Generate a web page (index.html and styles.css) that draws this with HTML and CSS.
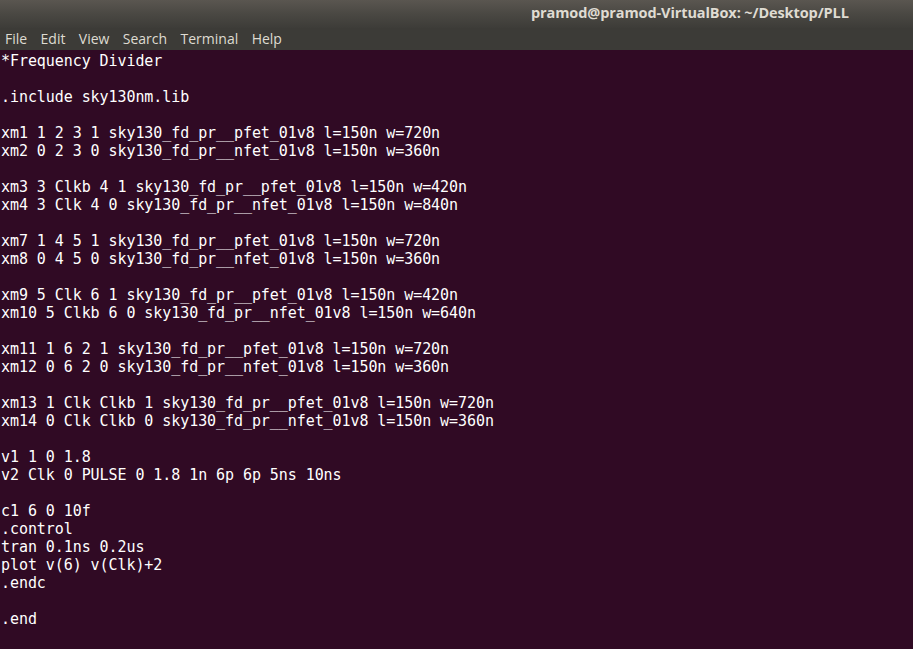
FILE: index.html
```html
<!DOCTYPE html>
<html>
<head>
<meta charset="utf-8">
<link rel="stylesheet" href="styles.css">
</head>
<body>
<div class="window">
  <div class="titlebar"><span class="title">pramod@pramod-VirtualBox: ~/Desktop/PLL</span></div>
  <div class="menubar">
    <span class="menu">File</span>
    <span class="menu">Edit</span>
    <span class="menu">View</span>
    <span class="menu">Search</span>
    <span class="menu">Terminal</span>
    <span class="menu">Help</span>
  </div>
  <pre class="term">*Frequency Divider

.include sky130nm.lib

xm1 1 2 3 1 sky130_fd_pr__pfet_01v8 l=150n w=720n
xm2 0 2 3 0 sky130_fd_pr__nfet_01v8 l=150n w=360n

xm3 3 Clkb 4 1 sky130_fd_pr__pfet_01v8 l=150n w=420n
xm4 3 Clk 4 0 sky130_fd_pr__nfet_01v8 l=150n w=840n

xm7 1 4 5 1 sky130_fd_pr__pfet_01v8 l=150n w=720n
xm8 0 4 5 0 sky130_fd_pr__nfet_01v8 l=150n w=360n

xm9 5 Clk 6 1 sky130_fd_pr__pfet_01v8 l=150n w=420n
xm10 5 Clkb 6 0 sky130_fd_pr__nfet_01v8 l=150n w=640n

xm11 1 6 2 1 sky130_fd_pr__pfet_01v8 l=150n w=720n
xm12 0 6 2 0 sky130_fd_pr__nfet_01v8 l=150n w=360n

xm13 1 Clk Clkb 1 sky130_fd_pr__pfet_01v8 l=150n w=720n
xm14 0 Clk Clkb 0 sky130_fd_pr__nfet_01v8 l=150n w=360n

v1 1 0 1.8
v2 Clk 0 PULSE 0 1.8 1n 6p 6p 5ns 10ns

c1 6 0 10f
.control
tran 0.1ns 0.2us
plot v(6) v(Clk)+2
.endc

.end</pre>
</div>
</body>
</html>
```
FILE: styles.css
```css
html, body {
  margin: 0;
  padding: 0;
  background: #300a24;
}
.window {
  width: 913px;
  height: 649px;
  overflow: hidden;
  display: flex;
  flex-direction: column;
}
.titlebar {
  height: 28px;
  background: linear-gradient(#5a5650, #4a4843 14px, #3d3c38 28px);
  display: flex;
  align-items: center;
  padding-left: 531px;
  box-sizing: border-box;
}
.title {
  font-family: "Open Sans", "DejaVu Sans", sans-serif;
  font-weight: 700;
  font-size: 14.5px;
  color: #dfdbd2;
  letter-spacing: -0.1px;
  margin-top: -4px;
}
.menubar {
  height: 22px;
  background: #3c3b37;
  display: flex;
  align-items: flex-start;
  padding-left: 5px;
  gap: 13.4px;
  box-sizing: border-box;
}
.menu {
  font-family: "Open Sans", "DejaVu Sans", sans-serif;
  font-size: 14px;
  color: #dfdbd2;
  line-height: 20px;
  margin-top: 1px;
}
.term {
  flex: 1;
  margin: 0;
  padding: 2px 0 0 1px;
  background: #300a24;
  color: #ffffff;
  font-family: "DejaVu Sans Mono", monospace;
  font-size: 15px;
  letter-spacing: -0.07px;
  line-height: 18px;
}
```
